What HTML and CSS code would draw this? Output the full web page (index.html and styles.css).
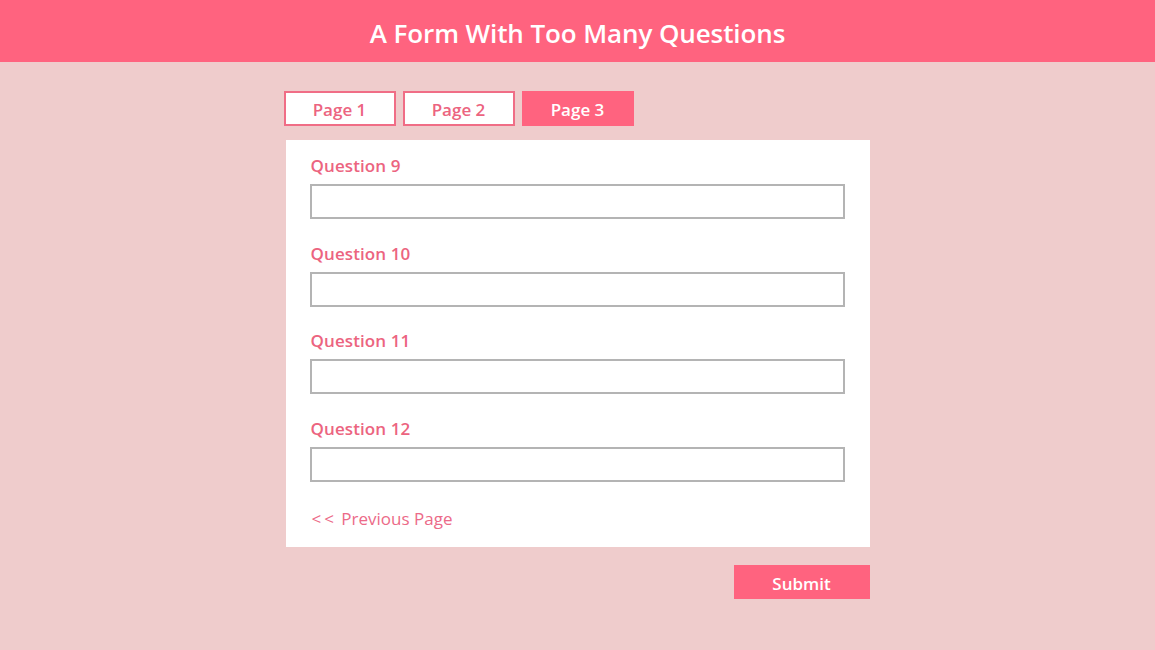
FILE: index.html
```html
<!DOCTYPE html>
<html>
<head>
<meta charset="utf-8">
<link rel="stylesheet" href="styles.css">
</head>
<body>
<header class="top-bar">
  <h1 class="title">A Form With Too Many Questions</h1>
</header>
<main class="wrapper">
  <nav class="tabs">
    <button class="tab">Page 1</button>
    <button class="tab">Page 2</button>
    <button class="tab tab-active">Page 3</button>
  </nav>
  <form class="card">
    <div class="field">
      <label class="label">Question 9</label>
      <input class="input" type="text">
    </div>
    <div class="field">
      <label class="label">Question 10</label>
      <input class="input" type="text">
    </div>
    <div class="field">
      <label class="label">Question 11</label>
      <input class="input" type="text">
    </div>
    <div class="field">
      <label class="label">Question 12</label>
      <input class="input" type="text">
    </div>
    <a class="prev-link" href="#"><span class="chev">&lt;&lt;</span> Previous Page</a>
  </form>
  <div class="actions">
    <button class="submit">Submit</button>
  </div>
</main>
</body>
</html>
```
FILE: styles.css
```css
* { box-sizing: border-box; }
html, body { margin: 0; padding: 0; }
body {
  background: #efcccc;
  font-family: "Open Sans", "Noto Sans", sans-serif;
  height: 650px;
  overflow: hidden;
}
.top-bar {
  background: #ff637f;
  height: 62px;
  display: flex;
  align-items: center;
  justify-content: center;
}
.title {
  margin: 0;
  color: #fff;
  font-size: 26px;
  font-weight: 600;
  letter-spacing: -0.1px;
  padding-top: 4px;
}
.wrapper {
  width: 584px;
  margin: 0 auto;
  padding-top: 29px;
}
.tabs {
  display: flex;
  gap: 7px;
  margin-left: -2px;
  margin-bottom: 14px;
}
.tab {
  width: 112px;
  height: 35px;
  background: #fff;
  border: 2px solid #f06d86;
  color: #ec6480;
  font-family: inherit;
  font-size: 17px;
  font-weight: 600;
  padding: 2px 0 0;
}
.tab-active {
  background: #ff637f;
  border-color: #ff637f;
  color: #fff;
}
.card {
  background: #fff;
  padding: 14px 25px 16px 24px;
  display: flex;
  flex-direction: column;
}
.field {
  display: flex;
  flex-direction: column;
  margin-bottom: 22.5px;
}
.label {
  color: #ec6480;
  font-size: 17px;
  font-weight: 600;
  line-height: 24px;
  letter-spacing: 0.1px;
  margin-left: 1px;
  margin-bottom: 6px;
}
.input {
  height: 35px;
  width: 100%;
  border: 2px solid #b4b4b4;
  background: #fff;
  margin: 0;
}
.prev-link {
  color: #ec6a88;
  text-decoration: none;
  font-size: 17px;
  line-height: 24px;
  letter-spacing: 0;
  margin-top: 3px;
  margin-left: 2px;
}
.chev {
  letter-spacing: 3px;
}
.actions {
  display: flex;
  justify-content: flex-end;
  margin-top: 18px;
}
.submit {
  width: 136px;
  height: 34px;
  background: #ff637f;
  border: none;
  color: #fff;
  font-family: inherit;
  font-size: 17px;
  font-weight: 600;
  padding: 2px 0 0;
}
```
